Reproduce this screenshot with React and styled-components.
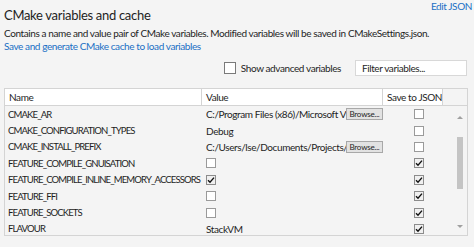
import React from 'react'
import styled, { createGlobalStyle } from 'styled-components'

const GlobalStyle = createGlobalStyle`
    html, body {
        margin: 0;
        padding: 0;
        background: #f4f4f4;
    }
    body {
        font-family: Lato, "Noto Sans", sans-serif;
        color: #1e1e1e;
    }
`

const rows = [
    { name: 'CMAKE_AR', value: 'C:/Program Files (x86)/Microsoft Visual Studio/2019/Community', browse: true, save: false },
    { name: 'CMAKE_CONFIGURATION_TYPES', value: 'Debug', save: false },
    { name: 'CMAKE_INSTALL_PREFIX', value: 'C:/Users/lse/Documents/Projects/PharoVM/build', browse: true, save: false },
    { name: 'FEATURE_COMPILE_GNUISATION', bool: false, save: true },
    { name: 'FEATURE_COMPILE_INLINE_MEMORY_ACCESSORS', bool: true, save: true },
    { name: 'FEATURE_FFI', bool: false, save: true },
    { name: 'FEATURE_SOCKETS', bool: false, save: true },
    { name: 'FLAVOUR', value: 'StackVM', save: true },
]

const Check = ({ checked }) => (
    <CheckBox checked={checked}>
        {checked && (
            <svg width="8" height="8" viewBox="0 0 8 8">
                <path d="M1 4.2 L3 6.2 L7 1.6" fill="none" stroke="#111" strokeWidth="1.4" />
            </svg>
        )}
    </CheckBox>
)

export default function App() {
    return (
        <Page>
            <GlobalStyle />
            <TitleBar>
                <Title>CMake variables and cache</Title>
                <Link>Edit JSON</Link>
            </TitleBar>
            <Description>
                Contains a name and value pair of CMake variables. Modified variables will be saved in CMakeSettings.json.
            </Description>
            <Link>Save and generate CMake cache to load variables</Link>
            <Toolbar>
                <AdvancedToggle>
                    <BigCheck />
                    Show advanced variables
                </AdvancedToggle>
                <Filter>Filter variables...</Filter>
            </Toolbar>
            <Grid>
                <HeaderRow>
                    <HeaderCell>Name</HeaderCell>
                    <HeaderCell>Value</HeaderCell>
                    <HeaderCell>Save to JSON</HeaderCell>
                </HeaderRow>
                <Body>
                    <Rows>
                        {rows.map(r => (
                            <Row key={r.name}>
                                <NameCell>{r.name}</NameCell>
                                <ValueCell>
                                    {r.bool !== undefined ? (
                                        <Check checked={r.bool} />
                                    ) : (
                                        <ValueText>{r.value}</ValueText>
                                    )}
                                    {r.browse && <Browse>Browse...</Browse>}
                                </ValueCell>
                                <SaveCell>
                                    <Check checked={r.save} />
                                </SaveCell>
                            </Row>
                        ))}
                    </Rows>
                    <Scrollbar>
                        <Arrow up />
                        <Track>
                            <Thumb />
                        </Track>
                        <Arrow />
                    </Scrollbar>
                </Body>
            </Grid>
        </Page>
    )
}

const Page = styled.div`
    width: 474px;
    height: 247px;
    padding: 0 2px 0 4px;
    box-sizing: border-box;
    overflow: hidden;
    font-size: 10px;
    letter-spacing: -0.4px;
`

const TitleBar = styled.div`
    display: flex;
    justify-content: space-between;
    align-items: flex-start;
    height: 27px;
`

const Title = styled.h1`
    margin: 6px 0 0;
    font-size: 13px;
    font-weight: 400;
    line-height: 18px;
    letter-spacing: -0.3px;
`

const Link = styled.div`
    color: #1a6fc4;
    font-size: 10px;
    line-height: 12px;
    white-space: nowrap;
`

const Description = styled.div`
    line-height: 13px;
    white-space: nowrap;
`

const Toolbar = styled.div`
    display: flex;
    justify-content: flex-end;
    align-items: center;
    gap: 14px;
    height: 16px;
    margin: 8px 5px 0 0;
`

const AdvancedToggle = styled.label`
    display: flex;
    align-items: center;
    gap: 5px;
`

const BigCheck = styled.span`
    width: 12px;
    height: 12px;
    box-sizing: border-box;
    border: 1px solid #7a7a7a;
    background: #fff;
`

const Filter = styled.div`
    width: 112px;
    height: 16px;
    box-sizing: border-box;
    border: 1px solid #d8d8d8;
    background: #fff;
    padding-left: 6px;
    line-height: 14px;
`

const Grid = styled.div`
    margin-top: 12px;
    width: 464px;
    height: 148px;
    box-sizing: border-box;
    border: 1px solid #d4d4d4;
`

const HeaderRow = styled.div`
    display: grid;
    grid-template-columns: 197px 181px 60px 1fr;
    height: 16px;
    border-bottom: 1px solid #d4d4d4;
`

const HeaderCell = styled.div`
    background: #fff;
    border-right: 1px solid #d4d4d4;
    padding-left: 4px;
    line-height: 16px;
    white-space: nowrap;
    overflow: hidden;
`

const Body = styled.div`
    display: flex;
`

const Rows = styled.div`
    flex: 1;
`

const Row = styled.div`
    display: grid;
    grid-template-columns: 198px 181px 1fr;
    height: 16.4px;
    align-items: center;
`

const NameCell = styled.div`
    padding-left: 3px;
    font-size: 9.5px;
    letter-spacing: -0.85px;
    white-space: nowrap;
    overflow: hidden;
`

const ValueCell = styled.div`
    display: flex;
    align-items: center;
    padding-left: 3px;
    overflow: hidden;
`

const ValueText = styled.span`
    flex: 1;
    min-width: 0;
    white-space: nowrap;
    overflow: hidden;
`

const Browse = styled.span`
    flex: none;
    width: 37px;
    height: 12px;
    box-sizing: border-box;
    margin-right: 1px;
    border: 1px solid #a8a8a8;
    background: #e2e2e2;
    font-size: 8px;
    letter-spacing: -0.2px;
    line-height: 10px;
    text-align: center;
    white-space: nowrap;
    overflow: hidden;
`

const SaveCell = styled.div`
    display: flex;
    justify-content: center;
`

const CheckBox = styled.span`
    display: flex;
    align-items: center;
    justify-content: center;
    width: 10px;
    height: 10px;
    box-sizing: border-box;
    border: 1px solid ${p => (p.checked ? '#8c8c8c' : '#9a9a9a')};
    background: ${p => (p.checked ? '#f0f0f0' : '#fff')};
`

const Scrollbar = styled.div`
    width: 14px;
    display: flex;
    flex-direction: column;
    align-items: center;
    height: 130px;
    padding: 10px 0 8px;
    box-sizing: border-box;
`

const Arrow = styled.div`
    width: 0;
    height: 0;
    border-left: 3px solid transparent;
    border-right: 3px solid transparent;
    ${p => (p.up ? 'border-bottom: 3px solid #a0a0a0;' : 'border-top: 3px solid #a0a0a0;')}
`

const Track = styled.div`
    flex: 1;
    width: 6px;
    padding-top: 18px;
`

const Thumb = styled.div`
    height: 52px;
    background: #c4c4c4;
`
